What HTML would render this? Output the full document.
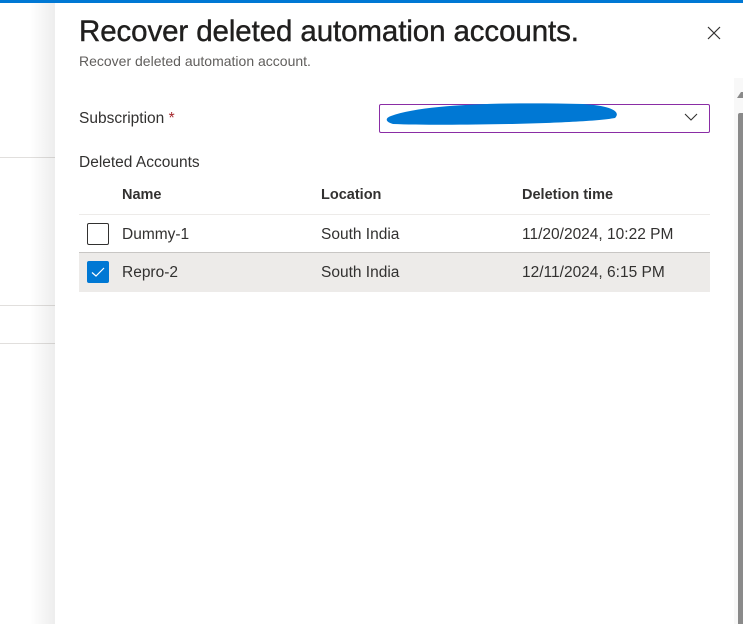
<!DOCTYPE html>
<html><head><style>
*{margin:0;padding:0;box-sizing:border-box}
body{width:743px;height:624px;overflow:hidden;background:#fff;font-family:"Liberation Sans",sans-serif;color:#323130;position:relative}
.abs{position:absolute;white-space:nowrap}
.t{font-size:15.5px}
.h{font-size:14.5px;font-weight:bold}
</style></head><body>
<div class="abs" style="left:0;top:0;width:743px;height:3px;background:#0078d4"></div>
<div class="abs" style="left:0;top:157px;width:55px;height:1px;background:#e1dfdd"></div>
<div class="abs" style="left:0;top:305px;width:55px;height:1px;background:#e1dfdd"></div>
<div class="abs" style="left:0;top:343px;width:55px;height:1px;background:#e1dfdd"></div>
<div class="abs" style="left:30px;top:3px;width:25px;height:621px;background:linear-gradient(to right,rgba(0,0,0,0),rgba(0,0,0,0.07))"></div>
<div class="abs" style="left:55px;top:3px;width:680px;height:621px;background:#fff"></div>
<div class="abs" style="left:79px;top:15px;font-size:29.5px;color:#201f1e;letter-spacing:-0.1px;-webkit-text-stroke:0.4px #201f1e">Recover deleted automation accounts.</div>
<div class="abs" style="left:79px;top:53px;font-size:14px;color:#605e5c">Recover deleted automation account.</div>
<svg class="abs" style="left:706px;top:25px" width="16" height="16"><path d="M2 2L14 14M14 2L2 14" stroke="#323130" stroke-width="1.2"/></svg>
<div class="abs t" style="left:79px;top:110px">Subscription <span style="color:#a4262c">*</span></div>
<div class="abs" style="left:379px;top:104px;width:331px;height:29px;border:1px solid #8a2da5;border-radius:2px"></div>
<svg class="abs" style="left:383px;top:98px" width="240" height="30"><path d="M8 18C40 6 120 4 200 6C230 8 238 14 232 20C200 26 60 28 10 26C2 24 2 20 8 18Z" fill="#0078d4"/></svg>
<svg class="abs" style="left:684px;top:112px" width="14" height="10"><path d="M1 2L7 8L13 2" stroke="#323130" stroke-width="1.1" fill="none"/></svg>
<div class="abs t" style="left:79px;top:154px">Deleted Accounts</div>
<div class="abs h" style="left:122px;top:187px">Name</div>
<div class="abs h" style="left:321px;top:187px">Location</div>
<div class="abs h" style="left:522px;top:187px">Deletion time</div>
<div class="abs" style="left:79px;top:214px;width:631px;height:1px;background:#edebe9"></div>
<div class="abs" style="left:87px;top:223px;width:22px;height:22px;border:1px solid #323130;border-radius:2px"></div>
<div class="abs t" style="left:122px;top:226px">Dummy-1</div>
<div class="abs t" style="left:321px;top:226px">South India</div>
<div class="abs t" style="left:522px;top:226px">11/20/2024, 10:22 PM</div>
<div class="abs" style="left:79px;top:252px;width:631px;height:40px;background:#edebe9;border-top:1px solid #c8c6c4"></div>
<div class="abs" style="left:87px;top:261px;width:22px;height:22px;background:#0078d4;border-radius:2px"></div>
<svg class="abs" style="left:87px;top:261px" width="22" height="22"><path d="M5 11.5L9 15L17 7" stroke="#fff" stroke-width="1.2" fill="none"/></svg>
<div class="abs t" style="left:122px;top:264px">Repro-2</div>
<div class="abs t" style="left:321px;top:264px">South India</div>
<div class="abs t" style="left:522px;top:264px">12/11/2024, 6:15 PM</div>
<div class="abs" style="left:734px;top:78px;width:9px;height:546px;background:#f8f8f8"></div>
<svg class="abs" style="left:737px;top:92px" width="6" height="8"><path d="M0 6L4 0L6 0L6 6Z" fill="#8a8a8a"/></svg>
<div class="abs" style="left:738px;top:113px;width:5px;height:511px;background:#8a8a8a;border-radius:2px 0 0 0"></div>
</body></html>
